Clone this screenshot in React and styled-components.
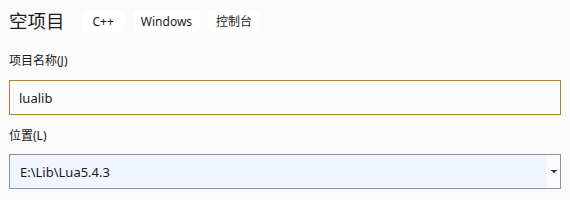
import styled, { createGlobalStyle } from "styled-components";

const GlobalStyle = createGlobalStyle`
  body {
    margin: 0;
    background: #fafafa;
    font-family: "Noto Sans", "Noto Sans CJK SC", sans-serif;
    color: #1a1a1a;
  }
`;

const Page = styled.div`
  width: 570px;
  height: 200px;
  box-sizing: border-box;
  padding: 10px 9px 0 9px;
  display: flex;
  flex-direction: column;
`;

const Header = styled.div`
  display: flex;
  align-items: center;
  height: 22px;
`;

const Title = styled.h1`
  margin: 0 17px 0 0;
  font-size: 18.5px;
  font-weight: 400;
  line-height: 22px;
  color: #1a1a1a;
`;

const Tags = styled.div`
  display: flex;
  gap: 8px;
`;

const Tag = styled.span`
  display: flex;
  align-items: center;
  justify-content: center;
  height: 22px;
  padding: 0 ${(p) => p.$pad || 9}px;
  background: #ffffff;
  border-radius: 5px;
  font-size: 12px;
  color: #1a1a1a;
`;

const Label = styled.div`
  margin-top: ${(p) => p.$top}px;
  font-size: 12px;
  line-height: 18px;
  color: #1a1a1a;
`;

const TextBox = styled.div`
  margin-top: 10px;
  height: 35px;
  box-sizing: border-box;
  border: 1px solid #ac8336;
  background: #fcfcfc;
  display: flex;
  align-items: center;
  padding-left: 9px;
  font-size: 13px;
`;

const Select = styled.div`
  margin-top: 9px;
  height: 35px;
  box-sizing: border-box;
  border: 1px solid #8a93a6;
  background: #f1f5fd;
  display: flex;
  align-items: stretch;
  font-size: 13px;
`;

const SelectValue = styled.div`
  flex: 1;
  display: flex;
  align-items: center;
  padding-left: 10px;
`;

const DropButton = styled.div`
  width: 13px;
  background: #fcfcfc;
  display: flex;
  align-items: center;
  justify-content: center;
`;

export default function App() {
  return (
    <>
      <GlobalStyle />
      <Page>
        <Header>
          <Title>空项目</Title>
          <Tags>
            <Tag $pad={11}>C++</Tag>
            <Tag $pad={8}>Windows</Tag>
            <Tag $pad={8}>控制台</Tag>
          </Tags>
        </Header>
        <Label $top={20}>项目名称(J)</Label>
        <TextBox>lualib</TextBox>
        <Label $top={12}>位置(L)</Label>
        <Select>
          <SelectValue>E:\Lib\Lua5.4.3</SelectValue>
          <DropButton>
            <svg width="6" height="4" viewBox="0 0 6 4">
              <rect x="0" y="0" width="6" height="1" fill="#2a3040" />
              <path d="M1 1 L5 1 L3 3.5 Z" fill="#2a3040" />
            </svg>
          </DropButton>
        </Select>
      </Page>
    </>
  );
}
